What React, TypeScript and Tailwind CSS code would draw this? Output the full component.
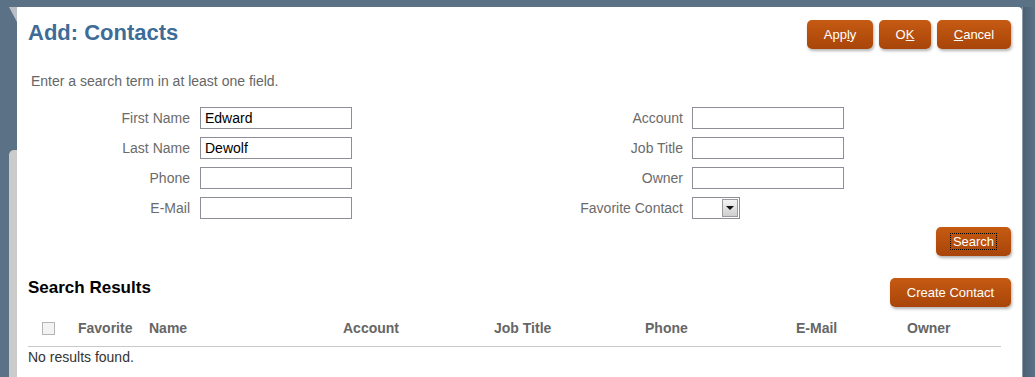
import React from "react";

const font = { fontFamily: '"Liberation Sans", Arial, sans-serif' };

function OrangeButton({ children, className = "" }: { children: React.ReactNode; className?: string }) {
  return (
    <button
      className={
        "h-[29px] rounded-[5px] bg-gradient-to-b from-[#c55a12] to-[#a9450a] text-[13px] text-white shadow-[1px_2px_3px_rgba(0,0,0,0.3)] " +
        className
      }
    >
      {children}
    </button>
  );
}

function Field({ label, value = "" }: { label: string; value?: string }) {
  return (
    <div className="flex h-[22px] items-center">
      <span className="w-[172px] pr-[10px] text-right text-[14px] text-[#6b6b6b]">{label}</span>
      <div className="flex h-[22px] w-[152px] items-center border border-[#8e8e99] bg-white px-[4px] text-[14px] text-black">
        {value}
      </div>
    </div>
  );
}

function RightField({ label, children }: { label: string; children?: React.ReactNode }) {
  return (
    <div className="flex h-[22px] items-center">
      <span className="w-[340px] pr-[9px] text-right text-[14px] text-[#6b6b6b]">{label}</span>
      {children ?? <div className="h-[22px] w-[152px] border border-[#8e8e99] bg-white" />}
    </div>
  );
}

const columns = [
  { label: "Favorite", w: "w-[71px]" },
  { label: "Name", w: "w-[194px]" },
  { label: "Account", w: "w-[151px]" },
  { label: "Job Title", w: "w-[151px]" },
  { label: "Phone", w: "w-[151px]" },
  { label: "E-Mail", w: "w-[111px]" },
  { label: "Owner", w: "w-[80px]" },
];

export default function App() {
  return (
    <div className="flex h-[377px] w-[1035px] overflow-hidden bg-[#5b7186]" style={font}>
      {/* background page peeking out on the left */}
      <div className="flex w-[17px] shrink-0 flex-col">
        <svg width="17" height="150" className="shrink-0">
          <polygon points="9,7 17,7 17,22" fill="#b9bfc5" />
        </svg>
        <div className="ml-[9px] flex-1 rounded-tl-[5px] bg-[#cbcbcb]" />
      </div>

      {/* dialog */}
      <div className="mt-[7px] flex w-[1005px] shrink-0 flex-col rounded-tr-[4px] bg-white pl-[11px] pr-[11px]">
        <div className="flex h-[42px] items-end justify-between">
          <h1 className="mb-[5px] text-[22px] font-bold leading-none text-[#3d6d97]">Add: Contacts</h1>
          <div className="flex gap-[6px]">
            <OrangeButton className="w-[66px]">
              App<span className="underline">l</span>y
            </OrangeButton>
            <OrangeButton className="w-[52px]">
              O<span className="underline">K</span>
            </OrangeButton>
            <OrangeButton className="w-[74px]">
              <span className="underline">C</span>ancel
            </OrangeButton>
          </div>
        </div>

        <p className="mt-[24px] pl-[3px] text-[14px] leading-[16px] text-[#666]">
          Enter a search term in at least one field.
        </p>

        <div className="mt-[18px] flex">
          <div className="flex flex-col gap-[8px]">
            <Field label="First Name" value="Edward" />
            <Field label="Last Name" value="Dewolf" />
            <Field label="Phone" />
            <Field label="E-Mail" />
          </div>
          <div className="flex flex-col gap-[8px]">
            <RightField label="Account" />
            <RightField label="Job Title" />
            <RightField label="Owner" />
            <RightField label="Favorite Contact">
              <div className="flex h-[22px] w-[48px] items-center justify-end border border-[#8e8e99] bg-white pr-[1px]">
                <div className="flex h-[18px] w-[16px] items-center justify-center border border-[#9a9a9a] bg-gradient-to-b from-[#f4f4f4] to-[#cfcfcf]">
                  <svg width="8" height="6" viewBox="0 0 8 6">
                    <polygon points="0,1 8,1 4,5" fill="#111" />
                  </svg>
                </div>
              </div>
            </RightField>
          </div>
        </div>

        <div className="mt-[8px] flex justify-end">
          <OrangeButton className="w-[75px]">
            <span className="border border-dotted border-black px-[2px]">Search</span>
          </OrangeButton>
        </div>

        <div className="mt-[22px] flex items-start justify-between">
          <h2 className="mt-[1px] text-[17px] font-bold leading-[18px] text-black">Search Results</h2>
          <OrangeButton className="w-[121px]">Create Contact</OrangeButton>
        </div>

        <div className="mr-[10px] mt-[8px] flex h-[32px] items-start border-b border-[#c8c8c8] pb-[6px] text-[14px] font-bold text-[#666]">
          <div className="flex h-[26px] w-[50px] items-center pl-[14px]">
            <div className="h-[13px] w-[13px] border border-[#b5b5b5] bg-[#f3f3f3]" />
          </div>
          {columns.map((c) => (
            <div key={c.label} className={"flex h-[26px] items-center " + c.w}>
              {c.label}
            </div>
          ))}
        </div>
        <p className="text-[14px] leading-[20px] text-[#333]">No results found.</p>
      </div>

      {/* right edge */}
      <div className="flex flex-1 pt-[7px]">
        <div className="w-[1px] bg-[#8a9aa8]" />
        <div className="flex-1 bg-gradient-to-r from-[#4c6072] to-[#5b7186]" />
      </div>
    </div>
  );
}
